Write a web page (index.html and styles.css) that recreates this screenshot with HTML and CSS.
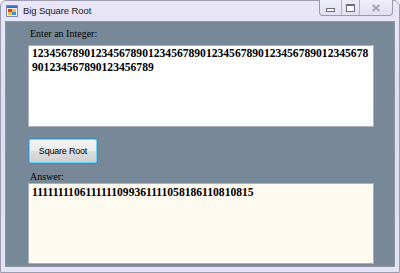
FILE: index.html
```html
<!DOCTYPE html>
<html lang="en">

<head>
    <meta charset="UTF-8">
    <title>Big Square Root</title>
    <link rel="stylesheet" href="styles.css">
</head>

<body>

    <div class="window">
        <div class="titlebar">
            <svg class="app-icon" width="12" height="12" viewBox="0 0 12 12">
                <rect x="0.5" y="0.5" width="11" height="11" fill="#f4f4f4" stroke="#7a8aa8" />
                <rect x="1" y="1" width="10" height="2" fill="#3b6fc4" />
                <rect x="2" y="4" width="4" height="3" fill="#e03a2a" />
                <rect x="6" y="4" width="4" height="3" fill="#f2c23a" />
                <rect x="2" y="7" width="4" height="3" fill="#f2c23a" />
                <rect x="6" y="7" width="4" height="3" fill="#3b8fe0" />
            </svg>
            <span class="title">Big Square Root</span>
            <div class="caption-buttons">
                <div class="cap min"><span class="min-glyph"></span></div>
                <div class="cap max"><span class="max-glyph"></span></div>
                <div class="cap close">
                    <svg width="10" height="8" viewBox="0 0 10 8">
                        <path d="M1.5 1 L8.5 7 M8.5 1 L1.5 7" stroke="#a4a4b4" stroke-width="2" fill="none" />
                    </svg>
                </div>
            </div>
        </div>

        <div class="client">
            <div class="label">Enter an Integer:</div>
            <div class="textbox input">1234567890123456789012345678901234567890123456789012345678901234567890123456789</div>

            <button class="btn" type="button">Square Root</button>

            <div class="label answer-label">Answer:</div>
            <div class="textbox answer">1111111106111111099361111058186110810815</div>
        </div>
    </div>

</body>

</html>
```

FILE: styles.css
```css
body {
    margin: 0;
    padding: 0;
    background-color: #ffffff;
}

.window {
    width: 400px;
    height: 273px;
    box-sizing: border-box;
    display: flex;
    flex-direction: column;
    background: linear-gradient(to bottom, #e8e6f7, #dfddf1 40%, #e4e2f4);
    border: 1px solid #9c9cb0;
    border-radius: 6px 6px 0 0;
}

.titlebar {
    height: 20px;
    display: flex;
    align-items: flex-start;
}

.app-icon {
    margin: 4px 0 0 5px;
}

.title {
    margin: 4px 0 0 5px;
    font-family: 'Liberation Sans', Arial, sans-serif;
    font-size: 9.5px;
    letter-spacing: -0.1px;
    color: #1a1a1a;
}

/* minimize / maximize / close group */
.caption-buttons {
    margin-left: auto;
    margin-right: 6px;
    margin-top: -1px;
    display: flex;
    height: 15px;
    border: 1px solid #9a9aac;
    border-top: none;
    border-radius: 0 0 4px 4px;
    background: linear-gradient(to bottom, #eeedf8, #e2e0f2);
    overflow: hidden;
}

.cap {
    display: flex;
    align-items: center;
    justify-content: center;
}

.min {
    width: 21px;
    border-right: 1px solid #b4b4c6;
}

.max {
    width: 17px;
    border-right: 1px solid #b4b4c6;
}

.close {
    width: 32px;
}

.min-glyph {
    width: 7px;
    height: 2px;
    margin-top: 5px;
    border: 1px solid #6a6a80;
    background-color: #ffffff;
}

.max-glyph {
    width: 7px;
    height: 5px;
    border: 1px solid #6a6a80;
    border-top-width: 2px;
    background-color: #ffffff;
}

.client {
    flex: 1;
    margin: 0 4px 5px 4px;
    padding: 5px 0 0 22px;
    background-color: #778899;
    border: 1px solid #8e96a6;
}

.label {
    height: 13px;
    margin-left: 2px;
    font-family: 'Liberation Serif', 'Times New Roman', serif;
    font-size: 10px;
    line-height: 13px;
    color: #000000;
}

.textbox {
    width: 346px;
    box-sizing: border-box;
    margin-top: 5px;
    padding: 1px 3px;
    border: 1px solid #a9b0bc;
    font-family: 'Liberation Serif', 'Times New Roman', serif;
    font-weight: bold;
    font-size: 11.6px;
    line-height: 14px;
    color: #000000;
    word-break: break-all;
}

.input {
    height: 82px;
    background-color: #ffffff;
}

.answer {
    height: 81px;
    padding-top: 2px;
    background-color: #fffaf0;
}

.btn {
    display: block;
    width: 70px;
    height: 26px;
    margin-top: 11px;
    padding: 0;
    border: 1px solid #3c8cc4;
    border-radius: 3px;
    box-shadow: inset 0 0 0 1px #6fd6fb;
    background: linear-gradient(to bottom, #f4f4f4, #ebebeb 50%, #dddddd 50%, #cfcfcf);
    font-family: 'Liberation Sans', Arial, sans-serif;
    font-size: 9px;
    letter-spacing: -0.2px;
    color: #000000;
}

.answer-label {
    margin-top: 6px;
}

.answer-label + .textbox {
    margin-top: 0;
}
```
